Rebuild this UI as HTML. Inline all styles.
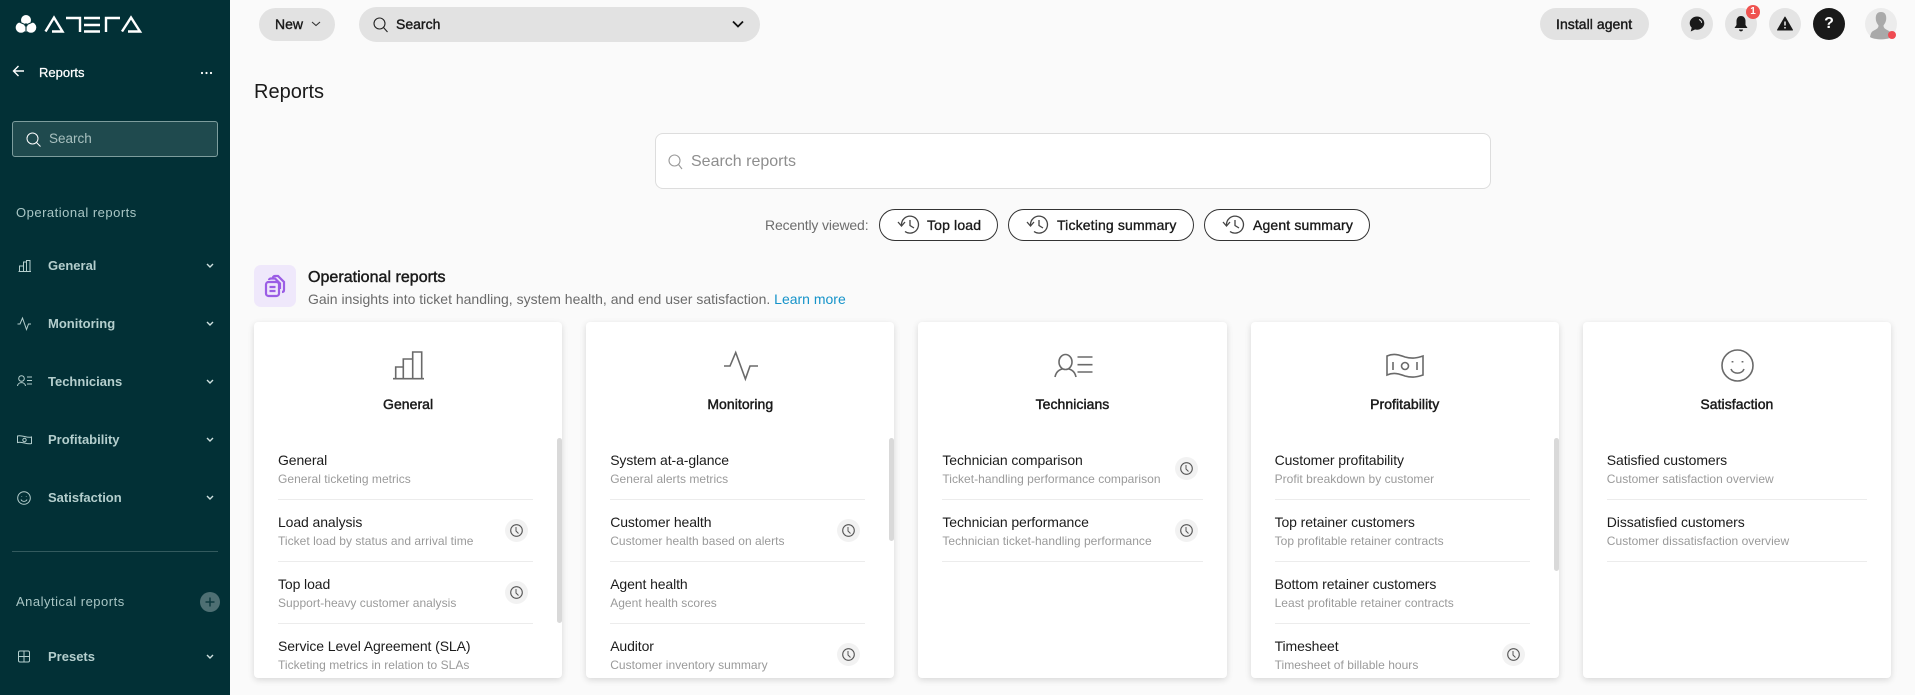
<!DOCTYPE html>
<html lang="en"><head><meta charset="utf-8"><title>Reports</title>
<style>
*{box-sizing:border-box;margin:0;padding:0}
html,body{width:1915px;height:695px;overflow:hidden;background:#fafafa;font-family:"Liberation Sans",sans-serif;color:#1a1a1a}
.a{position:absolute;white-space:nowrap}
svg{position:absolute;overflow:visible}
#side{position:absolute;left:0;top:0;width:230px;height:695px;background:#023036}
.nav{position:absolute;left:48px;font-size:13px;font-weight:700;color:#b4cecd;line-height:20px}
.sec{position:absolute;left:16px;font-size:13px;color:#a9c6c5;line-height:18px;letter-spacing:.5px}
.pill{position:absolute;background:#e2e2e2;border-radius:17px}
.circ{position:absolute;top:8px;width:32px;height:32px;border-radius:50%;background:#e4e4e4}
.chip{position:absolute;top:209px;height:32px;border:1px solid #333;border-radius:16px;background:#fff}
.chip span{position:absolute;top:7px;font-size:14px;line-height:17px;letter-spacing:.15px;-webkit-text-stroke:.35px #1a1a1a}
.card{position:absolute;top:322px;width:308.2px;height:356px;background:#fff;border-radius:4px;box-shadow:0 2px 7px rgba(0,0,0,.14);overflow:hidden}
.ct{position:absolute;left:0;right:0;top:73px;text-align:center;font-size:14px;line-height:18px;letter-spacing:.05px;-webkit-text-stroke:.45px #1a1a1a}
.r{position:absolute;left:24px;right:29px;height:62px;border-bottom:1px solid #ececec}
.ns .r{right:24px}
.r b{position:absolute;left:0;top:13px;font-weight:400;font-size:14px;line-height:18px;white-space:nowrap;color:#1c1c1c;letter-spacing:-.1px}
.r i{position:absolute;left:0;top:33px;font-style:normal;font-size:12px;line-height:16px;white-space:nowrap;color:#9a9a9a;letter-spacing:.03px}
.r svg{right:5px;top:19px}
.sb{position:absolute;right:0;top:116px;width:5px;background:#d9d9d9;border-radius:3px}
.ic{fill:none;stroke:#6a6a6a;stroke-width:1.6}
</style></head><body>
<div id="side">
<svg style="left:0;top:0" width="230" height="60"><title>ATERA</title>
<g fill="#fff"><circle cx="26" cy="20" r="5"/><circle cx="21" cy="27.500" r="5.300"/><circle cx="31" cy="27.500" r="5.300"/><path d="M26 16L34 27L26 32L18 27Z"/></g>
<path d="M26 25V33.500M26 25L17 21M26 25L35 21" stroke="#023036" stroke-width="1.100"/><circle cx="26" cy="25" r="1.600" fill="#023036"/>
<g fill="none" stroke="#fff" stroke-width="2.400"><path d="M45.500 31.500L54 17.500L62.500 31.500H52"/><path d="M66 18H80V32"/><path d="M84 18H100M84 25H100M84 31.500H100"/><path d="M106 32V18H120"/><path d="M122 31.500L131 17.500L140 31.500H128"/></g></svg>
<svg style="left:12px;top:64px" width="13" height="14" fill="none" stroke="#fff" stroke-width="1.400"><path d="M12 7H1.500M6.500 2L1.500 7L6.500 12"/></svg>
<div class="a" style="left:39px;top:64px;font-size:13px;line-height:18px;color:#fff;-webkit-text-stroke:.25px #fff">Reports</div>
<svg style="left:200px;top:71px" width="13" height="4" fill="#fff"><circle cx="2" cy="2" r="1.100"/><circle cx="6.500" cy="2" r="1.100"/><circle cx="11" cy="2" r="1.100"/></svg>
<div style="position:absolute;left:12px;top:121px;width:206px;height:36px;background:#1f4a4e;border:1px solid #7d9d9d;border-radius:3px"></div>
<svg style="left:26px;top:132px" width="15" height="15" fill="none" stroke="#fff" stroke-width="1"><circle cx="6.500" cy="6.500" r="5.500"/><path d="M10.500 10.500L14.500 14.500"/></svg>
<div class="a" style="left:49px;top:130px;font-size:13.500px;line-height:18px;color:#a8c0bf">Search</div>
<div class="sec" style="top:204px">Operational reports</div>
<div class="nav" style="top:256px">General</div>
<div class="nav" style="top:314px">Monitoring</div>
<div class="nav" style="top:372px">Technicians</div>
<div class="nav" style="top:430px">Profitability</div>
<div class="nav" style="top:488px">Satisfaction</div>
<svg style="left:0;top:0" width="230" height="695" fill="none" stroke="#b4cecd" stroke-width="1">
<path d="M18.500 271.500H31M19.500 271.500V266H23.500V271.500M23.500 271.500V262H26.500V271.500M26.500 271.500V260.500H30V271.500"/>
<path d="M17.500 324H20L22.500 318L26.500 329.500L28.500 324H31"/>
<circle cx="21.500" cy="378.500" r="2.800"/><path d="M17.500 386C18 381.500 25 381.500 25.500 386M27 377H32M27 380.500H32M27 384H32"/>
<path d="M17.500 436C22 434.500 27 438.500 31.500 437V443.500C27 445 22 441 17.500 442.500Z"/><circle cx="24.500" cy="440" r="1.700"/>
<circle cx="24" cy="498" r="6.300"/><path d="M21 499.500C22 502 26 502 27 499.500M21.700 496V496.500M26.300 496V496.500"/>
<rect x="18.500" y="651" width="11" height="11" rx="1.500"/><path d="M18.500 656.500H29.500M24 651V662"/>
</svg>
<svg style="left:0;top:0" width="230" height="695" fill="none" stroke="#cfe0df" stroke-width="1.400"><path d="M207 264L210 267L213 264M207 322L210 325L213 322M207 380L210 383L213 380M207 438L210 441L213 438M207 496L210 499L213 496M207 655L210 658L213 655"/></svg>
<div style="position:absolute;left:12px;top:551px;width:206px;height:1px;background:#335a5e"></div>
<div class="sec" style="top:593px">Analytical reports</div>
<svg style="left:200px;top:592px" width="20" height="20"><circle cx="10" cy="10" r="10" fill="#4e6f73"/><path d="M5.500 10H14.500M10 5.500V14.500" stroke="#0e3a40" stroke-width="1.500"/></svg>
<div class="nav" style="top:647px">Presets</div>
</div>

<div class="pill" style="left:259px;top:8px;width:76px;height:33px"></div>
<div class="a" style="left:275px;top:15px;font-size:14px;line-height:18px;-webkit-text-stroke:.4px #1a1a1a">New</div>
<svg style="left:311px;top:21px" width="10" height="6" fill="none" stroke="#333" stroke-width="1.100"><path d="M1 1L5 4.500L9 1"/></svg>
<div class="pill" style="left:359px;top:7px;width:401px;height:35px;border-radius:18px"></div>
<svg style="left:373px;top:17px" width="15" height="16" fill="none" stroke="#222" stroke-width="1.100"><circle cx="6.500" cy="6.500" r="5.500"/><path d="M10.500 10.500L14.500 15"/></svg>
<div class="a" style="left:396px;top:15px;font-size:14px;line-height:18px;-webkit-text-stroke:.4px #1a1a1a">Search</div>
<svg style="left:732px;top:20px" width="12" height="9" fill="none" stroke="#111" stroke-width="1.800"><path d="M1 1.500L6 6.500L11 1.500"/></svg>

<div class="pill" style="left:1540px;top:8px;width:109px;height:32px;border-radius:16px"></div>
<div class="a" style="left:1556px;top:15px;font-size:14px;line-height:18px;letter-spacing:.05px;-webkit-text-stroke:.4px #1a1a1a">Install agent</div>
<div class="circ" style="left:1681px"></div><div class="circ" style="left:1725px"></div><div class="circ" style="left:1769px"></div><div class="circ" style="left:1813px;background:#1a1a1a"></div>
<svg style="left:1689px;top:16px" width="16" height="16"><path d="M8 .5C4 .5 .7 3.500 .7 7.200C.7 9 1.500 10.500 2.700 11.600L1.700 15.500L6 13.500C6.700 13.700 7.300 13.700 8 13.700C12 13.700 15.300 10.800 15.300 7.200C15.300 3.500 12 .5 8 .5Z" fill="#1a1a1a"/><path d="M10 3.500C11.500 4 12.500 5.200 12.600 6.800" stroke="#e4e4e4" fill="none"/></svg>
<svg style="left:1733px;top:15px" width="16" height="18" fill="#1a1a1a"><path d="M8 1C5 1 3.500 3.500 3.500 6V10L1.500 13H14.500L12.500 10V6C12.500 3.500 11 1 8 1Z"/><path d="M6 14.500H10C10 17 6 17 6 14.500Z"/></svg>
<div style="position:absolute;left:1746px;top:5px;width:14px;height:14px;border-radius:50%;background:#ef5350;color:#fff;font-size:10px;line-height:14px;text-align:center;font-weight:700">1</div>
<svg style="left:1777px;top:16px" width="16" height="15"><path d="M8 1L15.500 14H.5Z" fill="#1a1a1a" stroke="#1a1a1a" stroke-linejoin="round"/><path d="M8 5.500V9.500M8 11V12.500" stroke="#e4e4e4" stroke-width="1.600"/></svg>
<div class="a" style="left:1813px;top:14px;width:32px;text-align:center;font-size:16px;line-height:20px;font-weight:700;color:#fff">?</div>
<div style="position:absolute;left:1865px;top:8px;width:32px;height:32px;border-radius:50%;background:#ececec;overflow:hidden"></div>
<svg style="left:1865px;top:8px" width="32" height="32"><path d="M16 4C12 4 10.500 7 10.800 11C11 14 12.500 16 13.500 17.500C13.500 20 12 21 8 23C6 24 5.500 27 5 29C9 32 23 32 27 29C26.500 27 26 24 24 23C20 21 18.500 20 18.500 17.500C19.500 16 21 14 21.200 11C21.500 7 20 4 16 4Z" fill="#a9a9a9"/><circle cx="27" cy="27" r="4" fill="#ef4b52"/></svg>

<div class="a" style="left:254px;top:80px;font-size:20px;line-height:24px">Reports</div>

<div style="position:absolute;left:655px;top:133px;width:836px;height:56px;background:#fff;border:1px solid #ddd;border-radius:8px"></div>
<svg style="left:668px;top:154px" width="15" height="16" fill="none" stroke="#999" stroke-width="1.100"><circle cx="6.500" cy="6.500" r="5.500"/><path d="M10.500 10.500L14 15"/></svg>
<div class="a" style="left:691px;top:152px;font-size:16px;line-height:20px;color:#8e8e8e">Search reports</div>
<div class="a" style="left:765px;top:216px;font-size:14px;line-height:18px;letter-spacing:-.15px;color:#6d6d6d">Recently viewed:</div>
<div class="chip" style="left:879px;width:119px"><span style="left:47px">Top load</span></div>
<div class="chip" style="left:1008px;width:186px"><span style="left:48px">Ticketing summary</span></div>
<div class="chip" style="left:1204px;width:166px"><span style="left:48px">Agent summary</span></div>
<svg style="left:0;top:0" width="1915" height="695" fill="none" stroke="#444" stroke-width="1.300">
<path d="M901.500 225A8.500 8.500 0 1 1 905 231.500"/><path d="M898 222L901.500 226L905 222"/><path d="M910 220V225.500L914 228"/>
<path d="M1030.500 225A8.500 8.500 0 1 1 1034 231.500"/><path d="M1027 222L1030.500 226L1034 222"/><path d="M1039 220V225.500L1043 228"/>
<path d="M1226.500 225A8.500 8.500 0 1 1 1230 231.500"/><path d="M1223 222L1226.500 226L1230 222"/><path d="M1235 220V225.500L1239 228"/>
</svg>

<div style="position:absolute;left:254px;top:265px;width:42px;height:42px;border-radius:7px;background:#efe8fb"></div>
<svg style="left:265px;top:275px" width="20" height="22" fill="none" stroke="#9b5de5" stroke-width="2.200"><path d="M8 2.500C8 1.500 9 1 10 1H13L19 7V15C19 16.500 18 17 17 17"/><path d="M4 5C4 4 5 3.500 6 3.500H10L15 8.500V14"/><rect x="1" y="7" width="13" height="14" rx="2.500"/><path d="M4.500 12H10.500M4.500 16H10.500"/></svg>
<div class="a" style="left:308px;top:268px;font-size:16px;line-height:20px;letter-spacing:.03px;-webkit-text-stroke:.45px #1a1a1a">Operational reports</div>
<div class="a" style="left:308px;top:290px;font-size:14px;line-height:18px;color:#6b6b6b">Gain insights into ticket handling, system health, and end user satisfaction. <span style="color:#1593c9">Learn more</span></div>

<div class="card" style="left:254px">
<svg class="ic" style="left:139px;top:29px" width="32" height="30"><path d="M0 27.700H31M2.700 27.700V16H10.300V27.700M10.300 27.700V8H19.700V27.700M19.700 27.700V1H28.700V27.700"/></svg>
<div class="ct">General</div>
<div class="r" style="top:116px"><b>General</b><i>General ticketing metrics</i></div>
<div class="r" style="top:178px"><b>Load analysis</b><i>Ticket load by status and arrival time</i><svg width="23" height="23"><circle cx="11.500" cy="11.500" r="11.500" fill="#f2f2f2"/><circle cx="11.500" cy="11.500" r="5.800" fill="none" stroke="#555" stroke-width="1.100"/><path d="M11 8V12L13.500 14.500" fill="none" stroke="#555"/></svg></div>
<div class="r" style="top:240px"><b>Top load</b><i>Support-heavy customer analysis</i><svg width="23" height="23"><circle cx="11.500" cy="11.500" r="11.500" fill="#f2f2f2"/><circle cx="11.500" cy="11.500" r="5.800" fill="none" stroke="#555" stroke-width="1.100"/><path d="M11 8V12L13.500 14.500" fill="none" stroke="#555"/></svg></div>
<div class="r" style="top:302px"><b>Service Level Agreement (SLA)</b><i>Ticketing metrics in relation to SLAs</i></div>
<div class="sb" style="height:185px"></div>
</div>

<div class="card" style="left:586.200px">
<svg class="ic" style="left:137.800px;top:30px" width="36" height="30"><path d="M0 14H6L11.700 .5L21.400 27L26 14H34"/></svg>
<div class="ct">Monitoring</div>
<div class="r" style="top:116px"><b>System at-a-glance</b><i>General alerts metrics</i></div>
<div class="r" style="top:178px"><b>Customer health</b><i>Customer health based on alerts</i><svg width="23" height="23"><circle cx="11.500" cy="11.500" r="11.500" fill="#f2f2f2"/><circle cx="11.500" cy="11.500" r="5.800" fill="none" stroke="#555" stroke-width="1.100"/><path d="M11 8V12L13.500 14.500" fill="none" stroke="#555"/></svg></div>
<div class="r" style="top:240px"><b>Agent health</b><i>Agent health scores</i></div>
<div class="r" style="top:302px"><b>Auditor</b><i>Customer inventory summary</i><svg width="23" height="23"><circle cx="11.500" cy="11.500" r="11.500" fill="#f2f2f2"/><circle cx="11.500" cy="11.500" r="5.800" fill="none" stroke="#555" stroke-width="1.100"/><path d="M11 8V12L13.500 14.500" fill="none" stroke="#555"/></svg></div>
<div class="sb" style="height:103px"></div>
</div>

<div class="card ns" style="left:918.400px">
<svg class="ic" style="left:136.600px;top:32px" width="40" height="24"><ellipse cx="10.500" cy="8" rx="6.500" ry="7.500"/><path d="M0 23C1.500 15.500 7.500 15 7.500 15M21 23C19.500 15.500 13.500 15 13.500 15"/><path d="M22.500 3H37.500M22.500 10.700H37.500M22.500 18H37.500"/></svg>
<div class="ct">Technicians</div>
<div class="r" style="top:116px"><b>Technician comparison</b><i>Ticket-handling performance comparison</i><svg width="23" height="23"><circle cx="11.500" cy="11.500" r="11.500" fill="#f2f2f2"/><circle cx="11.500" cy="11.500" r="5.800" fill="none" stroke="#555" stroke-width="1.100"/><path d="M11 8V12L13.500 14.500" fill="none" stroke="#555"/></svg></div>
<div class="r" style="top:178px"><b>Technician performance</b><i>Technician ticket-handling performance</i><svg width="23" height="23"><circle cx="11.500" cy="11.500" r="11.500" fill="#f2f2f2"/><circle cx="11.500" cy="11.500" r="5.800" fill="none" stroke="#555" stroke-width="1.100"/><path d="M11 8V12L13.500 14.500" fill="none" stroke="#555"/></svg></div>
</div>

<div class="card" style="left:1250.600px">
<svg class="ic" style="left:135.400px;top:31px" width="38" height="26"><path d="M1 3C8 0 13 2 19 4C26 6 31 5 37 3V22C31 24 26 25 19 23C13 21 8 19 1 22Z"/><circle cx="19" cy="13" r="3.500"/><path d="M7 9V17M31 9V17"/></svg>
<div class="ct">Profitability</div>
<div class="r" style="top:116px"><b>Customer profitability</b><i>Profit breakdown by customer</i></div>
<div class="r" style="top:178px"><b>Top retainer customers</b><i>Top profitable retainer contracts</i></div>
<div class="r" style="top:240px"><b>Bottom retainer customers</b><i>Least profitable retainer contracts</i></div>
<div class="r" style="top:302px"><b>Timesheet</b><i>Timesheet of billable hours</i><svg width="23" height="23"><circle cx="11.500" cy="11.500" r="11.500" fill="#f2f2f2"/><circle cx="11.500" cy="11.500" r="5.800" fill="none" stroke="#555" stroke-width="1.100"/><path d="M11 8V12L13.500 14.500" fill="none" stroke="#555"/></svg></div>
<div class="sb" style="height:133px"></div>
</div>

<div class="card ns" style="left:1582.800px">
<svg class="ic" style="left:138px;top:27px" width="33" height="33"><circle cx="16.500" cy="16.500" r="15.500"/><path d="M10 20C12 25.500 21 25.500 23 20"/><path d="M11.500 12V13.500M21.500 12V13.500" stroke-width="1.800"/></svg>
<div class="ct">Satisfaction</div>
<div class="r" style="top:116px"><b>Satisfied customers</b><i>Customer satisfaction overview</i></div>
<div class="r" style="top:178px"><b>Dissatisfied customers</b><i>Customer dissatisfaction overview</i></div>
</div>
</body></html>
